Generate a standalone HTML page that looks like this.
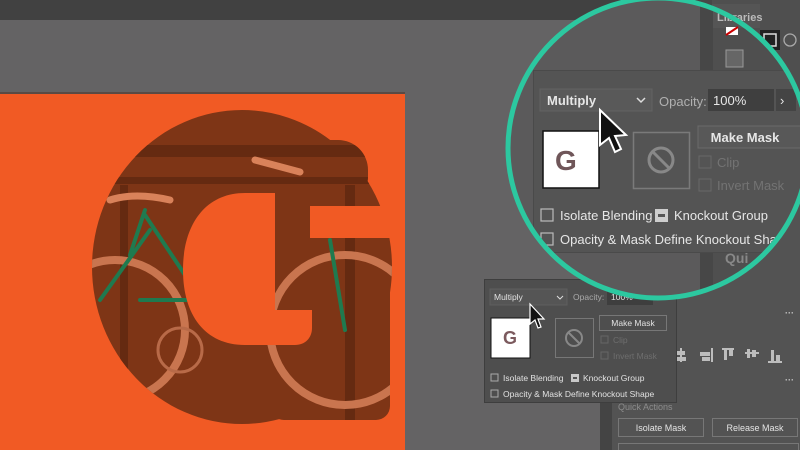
<!DOCTYPE html>
<html><head><meta charset="utf-8"><style>
html,body{margin:0;padding:0;width:800px;height:450px;overflow:hidden;background:#646364;font-family:"Liberation Sans",sans-serif}
</style></head><body>
<svg width="800" height="450" viewBox="0 0 800 450" xmlns="http://www.w3.org/2000/svg" font-family="Liberation Sans, sans-serif">
<defs>
<clipPath id="gclip">
 <ellipse cx="242" cy="267" rx="150" ry="157"/>
 <rect x="298" y="140" width="70" height="66" rx="30"/>
 <rect x="270" y="238" width="120" height="182" rx="14"/>
</clipPath>
<clipPath id="circ"><circle cx="658" cy="148" r="150"/></clipPath>
</defs>
<rect x="0" y="0" width="800" height="20" fill="#414141"/>
<rect x="0" y="20" width="600" height="430" fill="#646364"/>
<!-- top-right real panel -->
<rect x="697" y="0" width="15" height="100" fill="#474747"/>
<rect x="712" y="0" width="88" height="100" fill="#4f4f4f"/>
<rect x="712" y="4" width="48" height="24" fill="#555"/>
<text x="716" y="21" font-size="11" font-weight="bold" fill="#bbb">Libraries</text>
<rect x="726" y="27" width="12" height="8" fill="#fff"/><path d="M726 35 L738 27" stroke="#c00" stroke-width="2"/>
<rect x="760" y="30" width="20" height="20" fill="#222"/><rect x="764" y="34" width="12" height="12" fill="none" stroke="#ddd" stroke-width="1.5"/>
<circle cx="790" cy="40" r="6" fill="none" stroke="#aaa" stroke-width="1.3"/>
<rect x="726" y="50" width="17" height="17" fill="#666" stroke="#999"/>
<!-- artboard -->
<rect x="0" y="93" width="405" height="357" fill="#f15a24"/>
<rect x="0" y="92" width="405" height="2" fill="#5a4a44"/>
<g clip-path="url(#gclip)">
 <rect x="80" y="100" width="320" height="330" fill="#7e3516"/>
 <rect x="90" y="145" width="300" height="12" fill="#652a11"/>
 <rect x="90" y="177" width="300" height="7" fill="#652a11"/>
 <rect x="120" y="185" width="8" height="240" fill="#652a11"/>
 <rect x="345" y="185" width="10" height="240" fill="#652a11"/>
 <g fill="none" stroke-linecap="round">
  <circle cx="115" cy="330" r="70" stroke="#c9754f" stroke-width="8"/>
  <circle cx="345" cy="330" r="75" stroke="#c9754f" stroke-width="8"/>
  <path d="M145 210 L130 255 M145 215 L215 320 M150 230 L100 300 M140 300 L205 300 M330 240 L345 330" stroke="#1f7a4f" stroke-width="4"/>
  <path d="M110 200 Q135 192 170 200" stroke="#d9825a" stroke-width="7"/>
  <path d="M255 160 L300 172" stroke="#d9825a" stroke-width="7"/>
  <circle cx="180" cy="350" r="22" stroke="#b86a48" stroke-width="3"/>
 </g>
</g>
<g fill="#f15a24">
 <path d="M275 193 L245 193 C205 193 183 225 183 270 C183 315 205 345 245 345 L295 345 C305 345 312 338 312 328 L312 310 L275 310 Z"/>
 <rect x="310" y="206" width="95" height="32"/>
</g>

<!-- right panel -->
<rect x="600" y="100" width="12" height="350" fill="#444"/>
<rect x="612" y="100" width="188" height="350" fill="#535353"/>
<g fill="#c8c8c8" font-size="9">
 <text x="785" y="316" font-weight="bold">···</text>
 <text x="785" y="383" font-weight="bold">···</text>
 <text x="618" y="410" fill="#8c8c8c">Quick Actions</text>
</g>
<g fill="#bdbdbd">
 <rect x="677" y="351" width="8" height="4"/><rect x="680" y="348" width="2" height="14"/><rect x="676" y="357" width="10" height="4"/>
 <rect x="700" y="352" width="10" height="4"/><rect x="702" y="357" width="8" height="4"/><rect x="711" y="348" width="2" height="14"/>
 <rect x="722" y="348" width="12" height="2"/><rect x="724" y="350" width="3" height="10"/><rect x="729" y="350" width="4" height="6"/>
 <rect x="745" y="352" width="14" height="2"/><rect x="747" y="349" width="3" height="9"/><rect x="752" y="350" width="4" height="7"/>
 <rect x="768" y="361" width="14" height="2"/><rect x="771" y="350" width="3" height="11"/><rect x="776" y="355" width="4" height="6"/>
</g>
<g font-size="9" fill="#e4e4e4" text-anchor="middle">
 <rect x="618.5" y="418.5" width="85" height="18" fill="none" stroke="#777"/>
 <text x="661" y="431">Isolate Mask</text>
 <rect x="712.5" y="418.5" width="85" height="18" fill="none" stroke="#777"/>
 <text x="755" y="431">Release Mask</text>
</g>
<rect x="618.5" y="443.5" width="180" height="10" fill="none" stroke="#777"/>

<!-- small popup -->
<rect x="484.5" y="279.5" width="192" height="123" fill="#4e4e4e" stroke="#3e3e3e"/>
<g font-size="8.5" fill="#e2e2e2">
 <rect x="490" y="289" width="77" height="16" fill="#555" stroke="#5e5e5e"/>
 <text x="494" y="300">Multiply</text>
 <path d="M557 296 l3 3 l3 -3" stroke="#ddd" fill="none"/>
 <text x="573" y="300" fill="#aaa">Opacity:</text>
 <rect x="607" y="289" width="46" height="16" fill="#3e3e3e"/>
 <text x="611" y="300">100%</text>
 <text x="657" y="300">›</text>
 <rect x="491" y="318" width="39" height="40" fill="#fff" stroke="#111"/>
 <text x="503" y="344" font-size="18" font-weight="bold" fill="#7c5a5e">G</text>
 <rect x="555.5" y="318.5" width="38" height="39" fill="none" stroke="#777"/>
 <circle cx="574" cy="338" r="8" fill="none" stroke="#888" stroke-width="2"/>
 <path d="M568.5 332.5 L579.5 343.5" stroke="#888" stroke-width="2"/>
 <rect x="599.5" y="315.5" width="67" height="15" fill="none" stroke="#777"/>
 <text x="633" y="326" text-anchor="middle">Make Mask</text>
 <rect x="601" y="336" width="7" height="7" fill="none" stroke="#666"/>
 <text x="613" y="343" fill="#6e6e6e">Clip</text>
 <rect x="601" y="352" width="7" height="7" fill="none" stroke="#666"/>
 <text x="613" y="359" fill="#6e6e6e">Invert Mask</text>
 <rect x="491" y="374" width="7" height="7" fill="none" stroke="#aaa"/>
 <text x="503" y="381">Isolate Blending</text>
 <rect x="571" y="374" width="8" height="8" fill="#c8c8c8"/><rect x="573" y="377" width="4" height="2" fill="#555"/>
 <text x="583" y="381">Knockout Group</text>
 <rect x="491" y="390" width="7" height="7" fill="none" stroke="#aaa"/>
 <text x="503" y="397">Opacity &amp; Mask Define Knockout Shape</text>
</g>
<path d="M530 304 L530 324 L535 320 L538 328 L541 327 L538 319 L544 319 Z" fill="#111" stroke="#fff" stroke-width="1.2"/>

<!-- magnified circle -->
<g clip-path="url(#circ)">
 <rect x="500" y="0" width="300" height="300" fill="#5b5a5b"/>
 <rect x="713" y="0" width="90" height="300" fill="#4f4f4f"/>
 <rect x="700" y="0" width="13" height="300" fill="#474747"/>
 <rect x="713" y="4" width="50" height="24" fill="#555"/>
 <text x="717" y="21" font-size="11" font-weight="bold" fill="#bbb">Libraries</text>
 <rect x="726" y="27" width="12" height="8" fill="#fff"/><path d="M726 35 L738 27" stroke="#c00" stroke-width="2"/>
 <rect x="726" y="50" width="17" height="17" fill="#666" stroke="#999"/>
 <text x="725" y="263" font-size="14" font-weight="bold" fill="#888">Qui</text>
 <rect x="533.5" y="70.5" width="280" height="182" fill="#545454" stroke="#4a4a4a"/>
 <g font-size="13" fill="#e6e6e6">
  <rect x="540" y="89" width="112" height="22" fill="#595959" stroke="#626262"/>
  <text x="547" y="105" font-weight="bold">Multiply</text>
  <path d="M637 98 l4 4 l4 -4" stroke="#ddd" stroke-width="1.5" fill="none"/>
  <text x="659" y="106" fill="#b0b0b0">Opacity:</text>
  <rect x="708" y="89" width="66" height="22" fill="#3f3f3f"/>
  <text x="713" y="105">100%</text>
  <rect x="776" y="89" width="20" height="22" fill="#444"/>
  <text x="780" y="105">›</text>
  <rect x="543" y="131" width="56" height="57" fill="#fff" stroke="#111" stroke-width="1.5"/>
  <text x="555" y="170" font-size="28" font-weight="bold" fill="#6f5659">G</text>
  <rect x="633.5" y="132.5" width="56" height="56" fill="none" stroke="#7a7a7a" stroke-width="1.5"/>
  <circle cx="661" cy="160" r="12" fill="none" stroke="#888" stroke-width="3"/>
  <path d="M653 152 L669 168" stroke="#888" stroke-width="3"/>
  <rect x="698" y="126" width="105" height="22" fill="#585858" stroke="#6a6a6a"/>
  <text x="745" y="142" text-anchor="middle" font-weight="bold">Make Mask</text>
  <rect x="699" y="156" width="12" height="12" fill="none" stroke="#686868"/>
  <text x="717" y="167" fill="#737373">Clip</text>
  <rect x="699" y="179" width="12" height="12" fill="none" stroke="#686868"/>
  <text x="717" y="190" fill="#737373">Invert Mask</text>
  <rect x="541" y="209" width="12" height="12" fill="none" stroke="#bbb" stroke-width="1.2"/>
  <text x="560" y="220">Isolate Blending</text>
  <rect x="655" y="209" width="13" height="13" fill="#cdcdcd"/><rect x="658" y="214" width="7" height="3" fill="#555"/>
  <text x="674" y="220">Knockout Group</text>
  <rect x="541" y="233" width="12" height="12" fill="none" stroke="#bbb" stroke-width="1.2"/>
  <text x="560" y="244">Opacity &amp; Mask Define Knockout Shape</text>
 </g>
 <path d="M600 110 L600 145 L609 138 L615 152 L621 149 L615 136 L626 135 Z" fill="#111" stroke="#fff" stroke-width="2"/>
</g>
<circle cx="658" cy="148" r="150" fill="none" stroke="#2cc8a0" stroke-width="5"/>
</svg>
</body></html>
